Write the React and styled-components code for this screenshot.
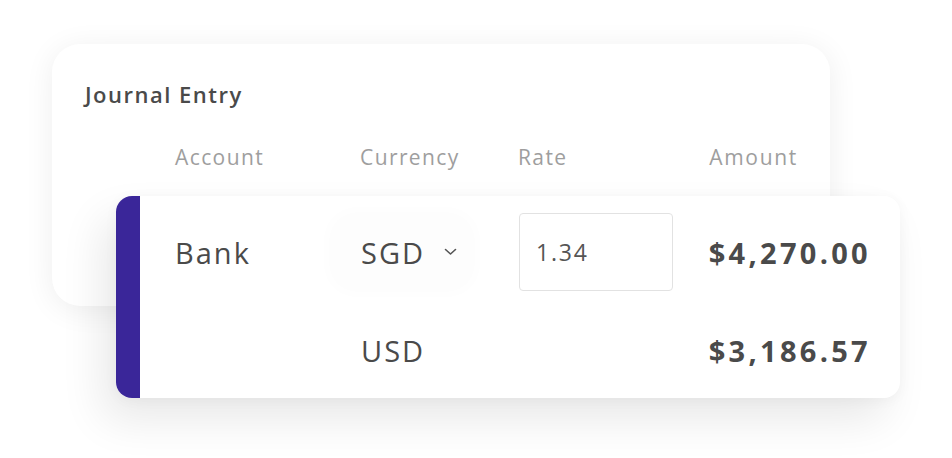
import styled, { createGlobalStyle } from 'styled-components'

const Global = createGlobalStyle`
   html, body {
      margin: 0;
      padding: 0;
      background: #fff;
   }
   body {
      font-family: 'Open Sans', 'Liberation Sans', sans-serif;
      color: #4a4a4a;
   }
`

const Stage = styled.div`
   width: 952px;
   height: 458px;
   padding: 44px 0 0 52px;
   box-sizing: border-box;
   overflow: hidden;
`

const BackCard = styled.div`
   width: 778px;
   height: 262px;
   box-sizing: border-box;
   padding: 36px 33px 0 33px;
   background: #fff;
   border-radius: 28px;
   box-shadow: 0 4px 30px rgba(0, 0, 0, 0.07);
`

const Title = styled.h2`
   margin: 0;
   font-size: 22px;
   font-weight: 600;
   letter-spacing: 1.5px;
   color: #4a4a4a;
   line-height: 28px;
`

const HeadRow = styled.div`
   display: grid;
   grid-template-columns: 185px 158px 1fr auto;
   padding-left: 90px;
   margin-top: 35px;
`

const Head = styled.span`
   font-size: 21px;
   color: #9e9e9e;
   line-height: 28px;
   letter-spacing: 1.4px;
   &:last-child {
      letter-spacing: 1.7px;
      margin-right: -1px;
   }
`

const FrontCard = styled.div`
   display: flex;
   width: 784px;
   height: 202px;
   margin: -110px 0 0 64px;
   background: #fff;
   border-radius: 16px;
   overflow: hidden;
   box-shadow: -14px 22px 44px rgba(0, 0, 0, 0.09), 0 2px 14px rgba(0, 0, 0, 0.04);
   position: relative;
`

const Accent = styled.div`
   width: 24px;
   flex: none;
   background: #3a2699;
`

const Grid = styled.div`
   flex: 1;
   display: grid;
   grid-template-columns: 186px 158px 154px 1fr;
   grid-template-rows: 78px 78px;
   row-gap: 20px;
   align-items: center;
   padding: 17px 32px 0 35px;
`

const Cell = styled.span`
   font-size: 29px;
   color: #4a4a4a;
   letter-spacing: 2px;
`

const Select = styled.div`
   display: flex;
   align-items: center;
   gap: 19px;
   height: 76px;
   margin-left: -30px;
   padding-left: 30px;
   width: 112px;
   border-radius: 24px;
   background: #fdfdfd;
   box-shadow: 0 0 16px 2px rgba(0, 0, 0, 0.015);
`

const RateBox = styled.div`
   height: 78px;
   box-sizing: border-box;
   border: 1.5px solid #e2e2e2;
   border-radius: 4px;
   display: flex;
   align-items: center;
   padding-left: 16px;
   font-size: 23px;
   letter-spacing: 1.8px;
   color: #555;
`

const Amount = styled.span`
   justify-self: end;
   font-size: 29px;
   font-weight: 700;
   letter-spacing: 3.3px;
   margin-right: -3px;
   color: #4a4a4a;
`

const Chevron = () => (
   <svg width="13" height="8" viewBox="0 0 13 8" fill="none">
      <path d="M1.5 1.5 L6.5 6 L11.5 1.5" stroke="#555" strokeWidth="1.6" strokeLinecap="round" strokeLinejoin="round" />
   </svg>
)

export default function App() {
   return (
      <Stage>
         <Global />
         <BackCard>
            <Title>Journal Entry</Title>
            <HeadRow>
               <Head>Account</Head>
               <Head>Currency</Head>
               <Head>Rate</Head>
               <Head>Amount</Head>
            </HeadRow>
         </BackCard>
         <FrontCard>
            <Accent />
            <Grid>
               <Cell>Bank</Cell>
               <Select>
                  <Cell>SGD</Cell>
                  <Chevron />
               </Select>
               <RateBox>1.34</RateBox>
               <Amount>$4,270.00</Amount>
               <span />
               <Cell>USD</Cell>
               <span />
               <Amount>$3,186.57</Amount>
            </Grid>
         </FrontCard>
      </Stage>
   )
}
